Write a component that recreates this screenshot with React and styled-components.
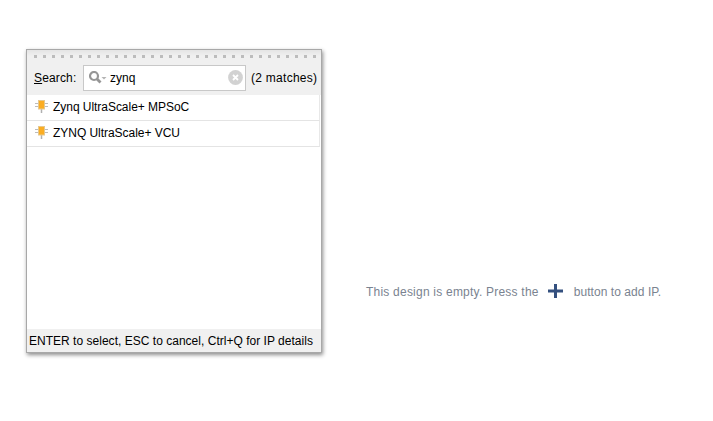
import React from "react";
import styled, { createGlobalStyle } from "styled-components";

const Global = createGlobalStyle`
  html, body { margin: 0; padding: 0; background: #fff; }
  body { font-family: "Liberation Sans", Arial, sans-serif; }
`;

const Canvas = styled.div`
  width: 713px;
  height: 421px;
  display: flex;
  align-items: flex-start;
  padding: 49px 0 0 26px;
  box-sizing: border-box;
  overflow: hidden;
`;

const Dialog = styled.div`
  width: 296px;
  height: 304px;
  flex: none;
  box-sizing: border-box;
  display: flex;
  flex-direction: column;
  background: #fff;
  border: 1px solid #a8a8a8;
  box-shadow: 1px 2px 4px rgba(0, 0, 0, 0.45);
`;

const Grip = styled.div`
  height: 10px;
  flex: none;
  background-color: #f0f0f0;
  background-image:
    repeating-linear-gradient(90deg, #bcbcbc 0 3px, transparent 3px 9px),
    linear-gradient(#e4e4e4, #f0f0f0);
  background-size: 100% 3px, 100% 6px;
  background-repeat: no-repeat;
  background-position: 7px 5px, 0 0;
`;

const SearchBar = styled.div`
  height: 35px;
  flex: none;
  display: flex;
  align-items: center;
  background: #f0f0f0;
  padding-left: 7px;
  font-size: 12px;
  color: #000;
`;

const SearchLabel = styled.label`
  width: 49px;
  flex: none;
  letter-spacing: 0.15px;
  u { text-decoration: underline; }
`;

const SearchBox = styled.div`
  width: 163px;
  height: 26px;
  flex: none;
  box-sizing: border-box;
  display: flex;
  align-items: center;
  background: #fff;
  border: 1px solid #c8c8c8;
  padding: 0 2px 0 5px;
`;

const SearchText = styled.span`
  flex: 1;
  margin-left: 3px;
  font-size: 12px;
  color: #000;
`;

const Matches = styled.span`
  margin-left: 5px;
  white-space: nowrap;
  letter-spacing: 0.27px;
`;

const List = styled.div`
  flex: 1;
  background: #fff;
  padding-right: 1px;
`;

const Row = styled.div`
  height: 26px;
  box-sizing: border-box;
  display: flex;
  align-items: center;
  gap: 5px;
  padding: 0 0 1px 8px;
  border-bottom: 1px solid #e4e4e4;
  border-right: 1px solid #e8e8e8;
  font-size: 12px;
  letter-spacing: -0.04px;
  color: #000;
`;

const IpSvg = styled.svg`
  flex: none;
  margin-top: -1px;
`;

const Footer = styled.div`
  height: 23px;
  flex: none;
  display: flex;
  align-items: center;
  background: #f0f0f0;
  padding: 1px 0 0 2px;
  box-sizing: border-box;
  font-size: 12px;
  letter-spacing: 0.02px;
  color: #000;
  white-space: nowrap;
`;

const Hint = styled.div`
  margin: 236px 0 0 44px;
  display: flex;
  align-items: center;
  font-size: 12px;
  color: #7a8390;
  white-space: nowrap;
`;

const HintText = styled.span`
  letter-spacing: ${(p) => p.$spacing}px;
`;

const PlusIcon = styled.svg`
  flex: none;
  margin: -2px 11px 0 9px;
`;

const IpIcon = () => (
  <IpSvg width="13" height="13" viewBox="0 0 13 13">
    <path d="M0 3.5h13M0 6.5h13" stroke="#bcbcbc" strokeWidth="1" />
    <path d="M6.5 9v4" stroke="#b0b0b0" strokeWidth="1.5" />
    <rect x="3.5" y="0.5" width="6" height="8.5" fill="#fbad22" stroke="#e6c88e" strokeWidth="1" />
  </IpSvg>
);

const SearchIcon = () => (
  <svg width="18" height="14" viewBox="0 0 18 14" style={{ flex: "none" }}>
    <circle cx="5" cy="5" r="4" fill="none" stroke="#969696" strokeWidth="2.2" />
    <path d="M8 8l3.5 3.5" stroke="#969696" strokeWidth="2.8" />
    <path d="M12.5 6h5l-2.5 2.5z" fill="#b4b4b4" />
  </svg>
);

const ClearIcon = () => (
  <svg width="15" height="15" viewBox="0 0 15 15" style={{ flex: "none" }}>
    <circle cx="7.5" cy="7.5" r="7.4" fill="#d2d2d2" />
    <path d="M5 5l5 5M10 5l-5 5" stroke="#fff" strokeWidth="1.8" />
  </svg>
);

export default function App() {
  return (
    <>
      <Global />
      <Canvas>
        <Dialog>
          <Grip />
          <SearchBar>
            <SearchLabel><u>S</u>earch:</SearchLabel>
            <SearchBox>
              <SearchIcon />
              <SearchText>zynq</SearchText>
              <ClearIcon />
            </SearchBox>
            <Matches>(2 matches)</Matches>
          </SearchBar>
          <List>
            <Row><IpIcon />Zynq UltraScale+ MPSoC</Row>
            <Row><IpIcon />ZYNQ UltraScale+ VCU</Row>
          </List>
          <Footer>ENTER to select, ESC to cancel, Ctrl+Q for IP details</Footer>
        </Dialog>
        <Hint>
          <HintText $spacing={0.22}>This design is empty. Press the</HintText>
          <PlusIcon width="15" height="14" viewBox="0 0 15 14">
            <path d="M7.5 0v14M0 7h15" stroke="#34507f" strokeWidth="3" />
          </PlusIcon>
          <HintText $spacing={0.06}>button to add IP.</HintText>
        </Hint>
      </Canvas>
    </>
  );
}
